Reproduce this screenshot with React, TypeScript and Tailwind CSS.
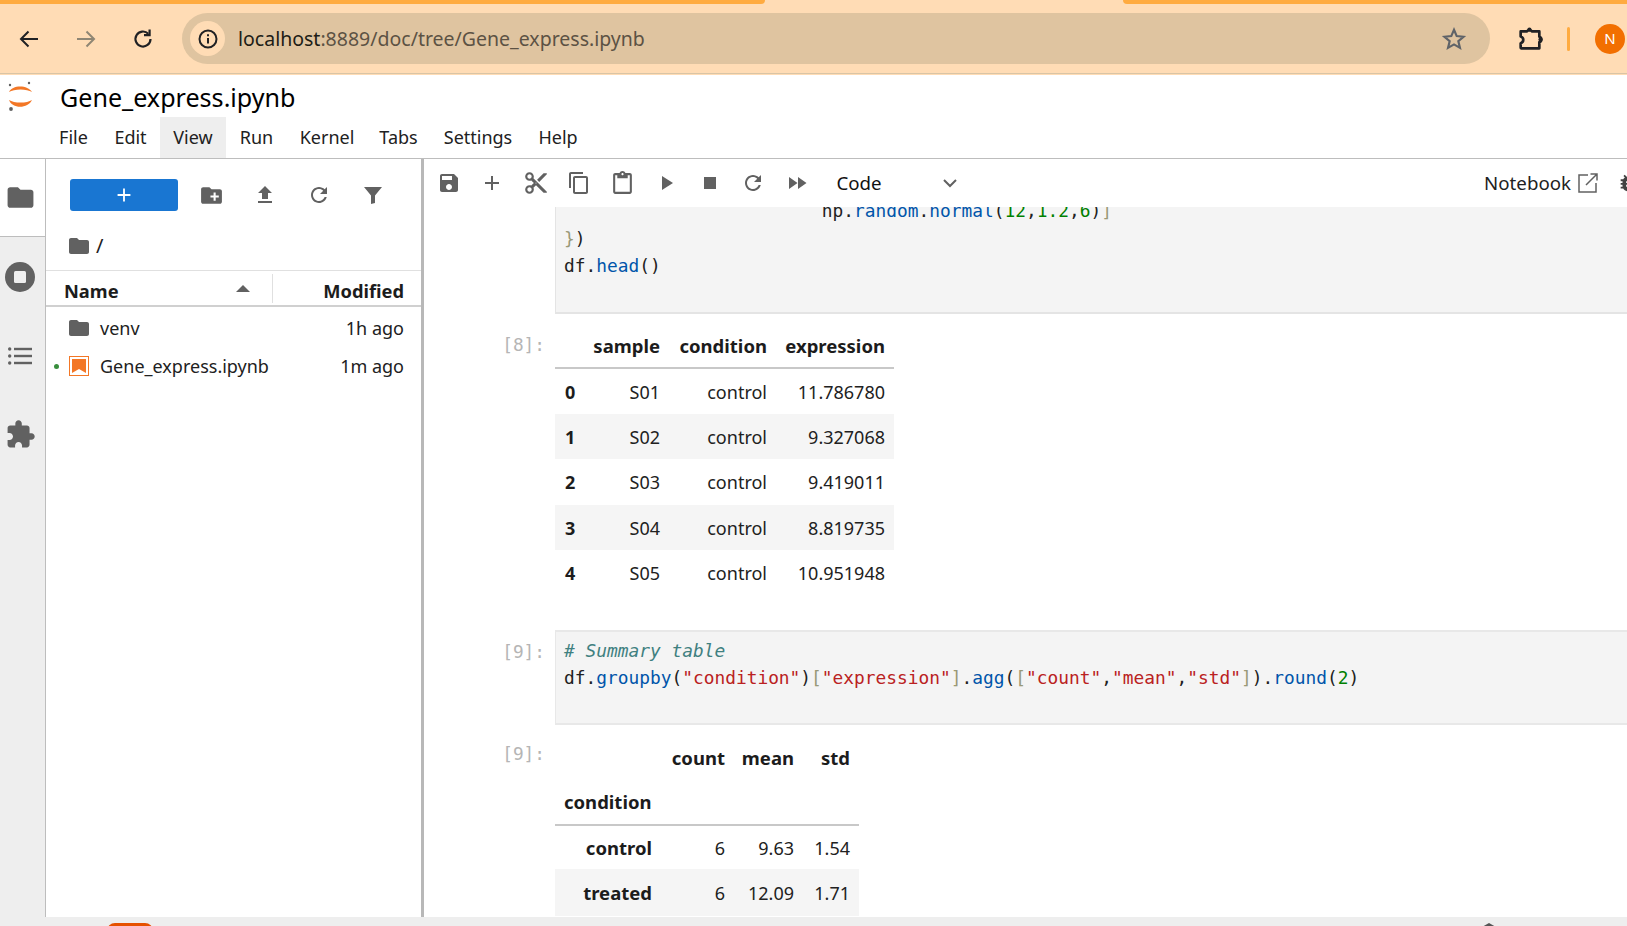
import type { ReactNode } from 'react';

const ICON = '#616161';

const P = {
  folder: 'M10 4H4c-1.1 0-1.99.9-1.99 2L2 18c0 1.1.9 2 2 2h16c1.1 0 2-.9 2-2V8c0-1.1-.9-2-2-2h-8l-2-2z',
  newFolder: 'M20 6h-8l-2-2H4c-1.11 0-1.99.89-1.99 2L2 18c0 1.11.89 2 2 2h16c1.11 0 2-.89 2-2V8c0-1.11-.89-2-2-2zm-1 8h-3v3h-2v-3h-3v-2h3V9h2v3h3v2z',
  upload: 'M9 16h6v-6h4l-7-7-7 7h4zm-4 2h14v2H5z',
  refresh: 'M17.65 6.35C16.2 4.9 14.21 4 12 4c-4.42 0-7.99 3.58-7.99 8s3.57 8 7.99 8c3.73 0 6.84-2.55 7.73-6h-2.08c-.82 2.33-3.04 4-5.65 4-3.31 0-6-2.69-6-6s2.69-6 6-6c1.66 0 3.14.69 4.22 1.78L13 11h7V4l-2.35 2.35z',
  filter: 'M3 4h18l-7 8.5V20l-4 1v-8.5z',
  save: 'M17 3H5c-1.11 0-2 .9-2 2v14c0 1.1.89 2 2 2h14c1.1 0 2-.9 2-2V7l-4-4zm-5 16c-1.66 0-3-1.34-3-3s1.34-3 3-3 3 1.34 3 3-1.34 3-3 3zm3-10H5V5h10v4z',
  add: 'M19 13h-6v6h-2v-6H5v-2h6V5h2v6h6v2z',
  cut: 'M9.64 7.64c.23-.5.36-1.05.36-1.64 0-2.21-1.79-4-4-4S2 3.79 2 6s1.79 4 4 4c.59 0 1.14-.13 1.64-.36L10 12l-2.36 2.36C7.14 14.13 6.59 14 6 14c-2.21 0-4 1.79-4 4s1.79 4 4 4 4-1.79 4-4c0-.59-.13-1.14-.36-1.64L12 14l7 7h3v-1L9.64 7.64zM6 8c-1.1 0-2-.89-2-2s.9-2 2-2 2 .89 2 2-.9 2-2 2zm0 12c-1.1 0-2-.89-2-2s.9-2 2-2 2 .89 2 2-.9 2-2 2zm6-7.5c-.28 0-.5-.22-.5-.5s.22-.5.5-.5.5.22.5.5-.22.5-.5.5zM19 3l-6 6 2 2 7-7V3z',
  copy: 'M16 1H4c-1.1 0-2 .9-2 2v14h2V3h12V1zm3 4H8c-1.1 0-2 .9-2 2v14c0 1.1.9 2 2 2h11c1.1 0 2-.9 2-2V7c0-1.1-.9-2-2-2zm0 16H8V7h11v14z',
  paste: 'M19 2h-4.18C14.4.84 13.3 0 12 0c-1.3 0-2.4.84-2.82 2H5c-1.1 0-2 .9-2 2v16c0 1.1.9 2 2 2h14c1.1 0 2-.9 2-2V4c0-1.1-.9-2-2-2zm-7 0c.55 0 1 .45 1 1s-.45 1-1 1-1-.45-1-1 .45-1 1-1zm7 18H5V4h2v3h10V4h2v16z',
  run: 'M8 5v14l11-7z',
  stop: 'M6 6h12v12H6z',
  fastForward: 'M4 18l8.5-6L4 6v12zm9-12v12l8.5-6L13 6z',
  extension: 'M20.5 11H19V7c0-1.1-.9-2-2-2h-4V3.5C13 2.12 11.88 1 10.5 1S8 2.12 8 3.5V5H4c-1.1 0-1.99.9-1.99 2v3.8H3.5c1.49 0 2.7 1.21 2.7 2.7s-1.21 2.7-2.7 2.7H2V20c0 1.1.9 2 2 2h3.8v-1.5c0-1.49 1.21-2.7 2.7-2.7 1.49 0 2.7 1.21 2.7 2.7V22H17c1.1 0 2-.9 2-2v-4h1.5c1.38 0 2.5-1.12 2.5-2.5S21.88 11 20.5 11z',
  bug: 'M20 8h-2.81a5.985 5.985 0 0 0-1.82-1.96L17 4.41 15.59 3l-2.17 2.17a6.002 6.002 0 0 0-2.83 0L8.41 3 7 4.41l1.62 1.63C7.88 6.55 7.26 7.22 6.81 8H4v2h2.09c-.05.33-.09.66-.09 1v1H4v2h2v1c0 .34.04.67.09 1H4v2h2.81c1.04 1.79 2.97 3 5.19 3s4.15-1.21 5.19-3H20v-2h-2.09c.05-.33.09-.66.09-1v-1h2v-2h-2v-1c0-.34-.04-.67-.09-1H20V8zm-6 8h-4v-2h4v2zm0-4h-4v-2h4v2z',
};

const Icon = ({ d, size = 24, color = ICON }: { d: string; size?: number; color?: string }) => (
  <svg width={size} height={size} viewBox="0 0 24 24" fill={color} className="shrink-0">
    <path d={d} />
  </svg>
);

const Tool = ({ d, size = 24 }: { d: string; size?: number }) => (
  <div className="w-[43.5px] flex items-center justify-center shrink-0">
    <Icon d={d} size={size} />
  </div>
);

const JupyterLogo = () => (
  <svg width="26" height="30" viewBox="8 80 26 30" className="shrink-0">
    <path d="M9 91C12 83.5 28 83.5 32 91 27 87.6 14 87.6 9 91z" fill="#f37726" />
    <path d="M9 99C14 102.4 27 102.4 32 99 28 108 12 108 9 99z" fill="#f37726" />
    <circle cx="10" cy="84" r="1.2" fill="#616161" />
    <circle cx="29" cy="82" r="1.2" fill="#616161" />
    <circle cx="11" cy="108" r="1.9" fill="#616161" />
  </svg>
);

const BrowserBar = () => (
  <div className="h-[75px] bg-[#ffdcb5] shrink-0">
    <div className="flex h-[4px] bg-[#ffdcb5]">
      <div className="w-[765px] bg-[#ffab40] rounded-br-[5px]" />
      <div className="w-[358px]" />
      <div className="flex-1 bg-[#ffab40] rounded-bl-[5px]" />
    </div>
    <div className="h-[70px] border-b border-[#d9c5a6] flex items-center">
      <svg width="24" height="24" viewBox="0 0 24 24" fill="none" stroke="#202124" strokeWidth="2" className="ml-[17px] shrink-0">
        <path d="M21 12H4M11.5 4.5 4 12l7.5 7.5" />
      </svg>
      <svg width="24" height="24" viewBox="0 0 24 24" fill="none" stroke="#8f8674" strokeWidth="2" className="ml-[33px] shrink-0">
        <path d="M3 12h17M12.5 4.5 20 12l-7.5 7.5" />
      </svg>
      <svg width="24" height="24" viewBox="0 0 24 24" fill="none" stroke="#202124" strokeWidth="2.2" className="ml-[33px] shrink-0">
        <path d="M19.5 12a7.5 7.5 0 1 1-2.2-5.3" />
        <path d="M18.6 2.6v5.6h-5.6" />
      </svg>
      <div className="ml-[27px] w-[1308px] h-[51px] rounded-full bg-[#dfc4a0] flex items-center shrink-0">
        <div className="ml-[8px] w-[35px] h-[35px] rounded-full bg-[#ffdcb5] flex items-center justify-center">
          <svg width="22" height="22" viewBox="0 0 22 22" fill="none" stroke="#202124" strokeWidth="2">
            <circle cx="11" cy="11" r="8.5" />
            <path d="M11 10v5.5M11 6.2v2" />
          </svg>
        </div>
        <div className="ml-[13px] text-[19.5px] leading-none text-[#5c5244]">
          <span className="text-[#201c16]">localhost</span>:8889/doc/tree/Gene_express.ipynb
        </div>
        <svg width="26" height="26" viewBox="0 0 24 24" fill="none" stroke="#5f6368" strokeWidth="2" className="ml-auto mr-[23px]">
          <path d="M12 3.5l2.5 5.8 6.3.6-4.8 4.1 1.5 6.2L12 17l-5.5 3.2L8 14 3.2 9.9l6.3-.6z" />
        </svg>
      </div>
      <svg width="28" height="28" viewBox="0 0 24 24" className="ml-[26px] shrink-0">
        <path d="M4 5.5h5.4a2.4 2.4 0 0 1 4.2 0H20v4.6a2.4 2.4 0 0 1 0 4.6v5.3H4.6a.8.8 0 0 1-.6-.8v-3.6a3 3 0 0 0 0-5.8z" fill="none" stroke="#202124" strokeWidth="2.3" strokeLinejoin="round" />
        <circle cx="21" cy="12.4" r="1.8" fill="#202124" />
        <circle cx="11.5" cy="4" r="1.8" fill="#202124" />
      </svg>
      <div className="ml-[23px] w-[3px] h-[24px] rounded-full bg-[#ffab40] shrink-0" />
      <div className="ml-[25px] w-[30px] h-[30px] rounded-full bg-[#f26f00] text-white text-[15px] flex items-center justify-center shrink-0">N</div>
    </div>
  </div>
);

const menuItems = [
  { label: 'File', cls: 'w-[55px]' },
  { label: 'Edit', cls: 'w-[59px]' },
  { label: 'View', cls: 'w-[66px] bg-[#eeeeee]' },
  { label: 'Run', cls: 'w-[61px]' },
  { label: 'Kernel', cls: 'w-[80px]' },
  { label: 'Tabs', cls: 'w-[63px]' },
  { label: 'Settings', cls: 'w-[96px]' },
  { label: 'Help', cls: 'w-[64px]' },
];

const AppHeader = () => (
  <div className="h-[84px] border-b border-[#bdbdbd] shrink-0 relative bg-white">
    <div className="h-[42px] flex">
      <div className="w-[60px] pl-[8px] pt-[6px]">
        <JupyterLogo />
      </div>
      <div className="text-[25.1px] leading-[44px] text-black">Gene_express.ipynb</div>
    </div>
    <div className="flex h-[41px] pl-[46px]">
      {menuItems.map((m) => (
        <div key={m.label} className={`${m.cls} flex items-center justify-center text-[18px] text-[#212121]`}>
          {m.label}
        </div>
      ))}
    </div>
  </div>
);

const SideRail = () => (
  <div className="w-[46px] shrink-0 flex flex-col bg-[#eeeeee] border-r border-[#bdbdbd]">
    <div className="h-[78px] bg-white border-b border-[#bdbdbd] flex items-center justify-center pr-[5px]">
      <Icon d={P.folder} size={31} />
    </div>
    <div className="h-[80px] flex items-center justify-center pr-[5px]">
      <svg width="30" height="30" viewBox="0 0 30 30">
        <circle cx="15" cy="15" r="15" fill={ICON} />
        <rect x="9" y="9" width="12" height="12" rx="1.5" fill="#eeeeee" />
      </svg>
    </div>
    <div className="h-[78px] flex items-center justify-center pr-[5px]">
      <svg width="24" height="18" viewBox="0 0 24 18" fill={ICON}>
        <circle cx="1.7" cy="2" r="1.7" />
        <circle cx="1.7" cy="9" r="1.7" />
        <circle cx="1.7" cy="16" r="1.7" />
        <rect x="6" y="0.8" width="18" height="2.4" />
        <rect x="6" y="7.8" width="18" height="2.4" />
        <rect x="6" y="14.8" width="18" height="2.4" />
      </svg>
    </div>
    <div className="h-[78px] flex items-center justify-center pr-[5px]">
      <Icon d={P.extension} size={31} />
    </div>
  </div>
);

const FilePanel = () => (
  <div className="w-[375px] shrink-0 flex flex-col bg-white text-[18px] text-[#212121]">
    <div className="h-[73px] flex items-center pl-[24px] pb-[1px]">
      <div className="w-[108px] h-[32px] rounded-[3px] bg-[#1976d2] flex items-center justify-center -mt-[1px]">
        <Icon d={P.add} size={22} color="#ffffff" />
      </div>
      <div className="ml-[19px] w-[28px] flex justify-center"><Icon d={P.newFolder} size={25} /></div>
      <div className="ml-[26px] w-[28px] flex justify-center"><Icon d={P.upload} size={24} /></div>
      <div className="ml-[26px] w-[28px] flex justify-center"><Icon d={P.refresh} size={24} /></div>
      <div className="ml-[26px] w-[28px] flex justify-center"><Icon d={P.filter} size={24} /></div>
    </div>
    <div className="h-[39px] flex items-center pl-[21px] border-b border-[#e0e0e0] pb-[10px]">
      <Icon d={P.folder} size={24} />
      <span className="ml-[5px] text-[20px]">/</span>
    </div>
    <div className="h-[36px] flex items-center border-b-2 border-[#d0d0d0] font-bold text-[18.3px] text-[#1c1c1c] shrink-0">
      <div className="w-[227px] pl-[18px] pt-[6px] flex items-center h-[29px] border-r border-[#e0e0e0]">
        Name
        <div className="ml-auto mr-[22px] -mt-[6px] w-0 h-0 border-l-[7px] border-r-[7px] border-b-[7px] border-l-transparent border-r-transparent border-b-[#616161]" />
      </div>
      <div className="flex-1 text-right pr-[17px] pt-[6px]">Modified</div>
    </div>
    <div className="h-[38px] mt-[2px] flex items-center pl-[21px] pr-[17px]">
      <Icon d={P.folder} size={24} />
      <span className="ml-[9px]">venv</span>
      <span className="ml-auto">1h ago</span>
    </div>
    <div className="h-[38px] flex items-center pl-[8px] pr-[17px] relative">
      <div className="w-[5px] h-[5px] rounded-full bg-[#388e3c] mr-[10px]" />
      <svg width="20" height="20" viewBox="0 0 20 20" className="shrink-0">
        <rect x="0.5" y="0.5" width="19" height="19" fill="#fff" stroke="#f37726" />
        <path d="M3 3h14v14l-7-4-7 4z" fill="#f37726" />
      </svg>
      <span className="ml-[11px]">Gene_express.ipynb</span>
      <span className="ml-auto">1m ago</span>
    </div>
  </div>
);

const NbToolbar = () => (
  <div className="h-[48px] flex items-center pl-[3px] bg-white shrink-0 overflow-hidden">
    <Tool d={P.save} />
    <Tool d={P.add} />
    <Tool d={P.cut} size={26} />
    <Tool d={P.copy} />
    <Tool d={P.paste} size={25} />
    <Tool d={P.run} />
    <Tool d={P.stop} />
    <Tool d={P.refresh} />
    <Tool d={P.fastForward} />
    <div className="ml-[18px] w-[104px] text-[18.7px] text-[#111111]">Code</div>
    <svg width="18" height="18" viewBox="0 0 18 18" fill="none" stroke={ICON} strokeWidth="2" className="shrink-0">
      <path d="M3 6l6 6 6-6" />
    </svg>
    <div className="ml-auto text-[18.7px] text-[#212121]">Notebook</div>
    <svg width="22" height="22" viewBox="0 0 22 22" fill="none" stroke={ICON} strokeWidth="1.5" className="ml-[6px] shrink-0">
      <path d="M11 3H2v17h17v-9M9 13 20 2M13.5 2H20v6.5" />
    </svg>
    <div className="ml-[18px] -mr-[12px] shrink-0"><Icon d={P.bug} size={22} color="#424242" /></div>
  </div>
);

const Nm = ({ children }: { children: ReactNode }) => <span className="text-[#0055aa]">{children}</span>;
const Str = ({ children }: { children: ReactNode }) => <span className="text-[#ba2121]">{children}</span>;
const Br = ({ children }: { children: ReactNode }) => <span className="text-[#999977]">{children}</span>;
const Num = ({ children }: { children: ReactNode }) => <span className="text-[#008000]">{children}</span>;

const Prompt = ({ text }: { text: string }) => (
  <div className="w-[131px] shrink-0 pr-[10px] text-right font-['DejaVu_Sans_Mono',monospace] text-[17.8px] leading-[27px] text-[#b5b5b5]">
    {text}
  </div>
);

const Code = ({ children }: { children: ReactNode }) => (
  <pre className="font-['DejaVu_Sans_Mono',monospace] text-[17.85px] leading-[27px] text-[#212121]">{children}</pre>
);

const th = 'pr-[9px] pt-[2px] text-right font-bold text-[18.5px] text-[#1c1c1c]';
const headTh = 'pr-[9px] text-right font-bold text-[18.5px] text-[#1c1c1c]';
const td = 'pr-[9px] pt-[2px] text-right font-normal';

const sampleRows = [
  ['0', 'S01', 'control', '11.786780'],
  ['1', 'S02', 'control', '9.327068'],
  ['2', 'S03', 'control', '9.419011'],
  ['3', 'S04', 'control', '8.819735'],
  ['4', 'S05', 'control', '10.951948'],
];

const SampleTable = () => (
  <table className="table-fixed w-[339px] text-[18px] text-[#212121] border-collapse">
    <colgroup>
      <col className="w-[30px]" />
      <col className="w-[84px]" />
      <col className="w-[107px]" />
      <col className="w-[118px]" />
    </colgroup>
    <thead>
      <tr className="h-[44px] border-b-2 border-[#c8c8c8]">
        <th />
        <th className={headTh}>sample</th>
        <th className={headTh}>condition</th>
        <th className={headTh}>expression</th>
      </tr>
    </thead>
    <tbody>
      {sampleRows.map((r, i) => (
        <tr key={r[0]} className={`h-[45.5px] ${i % 2 === 1 ? 'bg-[#f5f5f5]' : ''}`}>
          <td className="pl-[10px] pt-[2px] font-bold text-[#1c1c1c]">{r[0]}</td>
          <td className={td}>{r[1]}</td>
          <td className={td}>{r[2]}</td>
          <td className={td}>{r[3]}</td>
        </tr>
      ))}
    </tbody>
  </table>
);

const SummaryTable = () => (
  <table className="table-fixed w-[304px] text-[18px] text-[#212121] border-collapse">
    <colgroup>
      <col className="w-[106px]" />
      <col className="w-[73px]" />
      <col className="w-[69px]" />
      <col className="w-[56px]" />
    </colgroup>
    <thead>
      <tr className="h-[44px]">
        <th />
        <th className={headTh}>count</th>
        <th className={headTh}>mean</th>
        <th className={headTh}>std</th>
      </tr>
      <tr className="h-[45px] border-b-2 border-[#c8c8c8]">
        <th className="pl-[9px] text-left font-bold text-[18.5px] text-[#1c1c1c]">condition</th>
        <th />
        <th />
        <th />
      </tr>
    </thead>
    <tbody>
      <tr className="h-[44px]">
        <th className={th}>control</th>
        <td className={td}>6</td>
        <td className={td}>9.63</td>
        <td className={td}>1.54</td>
      </tr>
      <tr className="h-[47px] bg-[#f5f5f5]">
        <th className={th}>treated</th>
        <td className={td}>6</td>
        <td className={td}>12.09</td>
        <td className={td}>1.71</td>
      </tr>
    </tbody>
  </table>
);

const Notebook = () => (
  <div className="flex-1 min-w-0 flex flex-col bg-white border-l-[3px] border-[#b8b8b8]">
    <NbToolbar />
    <div className="flex-1 overflow-hidden">
      <div className="flex">
        <Prompt text="" />
        <div className="flex-1 h-[107px] overflow-hidden bg-[#f4f4f4] border-l border-b-2 border-[#e4e4e4] pl-[8px]">
          <div className="-mt-[10px]">
            <Code>
              {'                        np.'}<Nm>random</Nm>.<Nm>normal</Nm>(<Num>12</Num>,<Num>1.2</Num>,<Num>6</Num>)<Br>]</Br>
            </Code>
            <div className="mt-[1px]">
              <Code><Br>{'}'}</Br>)</Code>
            </div>
            <Code>df.<Nm>head</Nm>()</Code>
          </div>
        </div>
      </div>
      <div className="flex mt-[10px]">
        <div className="pt-[7px]"><Prompt text="[8]:" /></div>
        <SampleTable />
      </div>
      <div className="flex mt-[34px]">
        <div className="pt-[8px]"><Prompt text="[9]:" /></div>
        <div className="flex-1 h-[95px] bg-[#f4f4f4] border-l border-t-2 border-b-2 border-[#e8e8e8] pl-[8px] pt-[5px]">
          <Code><span className="italic text-[#408080]"># Summary table</span></Code>
          <Code>
            df.<Nm>groupby</Nm>(<Str>"condition"</Str>)<Br>[</Br><Str>"expression"</Str><Br>]</Br>.<Nm>agg</Nm>(<Br>[</Br><Str>"count"</Str>,<Str>"mean"</Str>,<Str>"std"</Str><Br>]</Br>).<Nm>round</Nm>(<Num>2</Num>)
          </Code>
        </div>
      </div>
      <div className="flex mt-[11px]">
        <div className="pt-[4px]"><Prompt text="[9]:" /></div>
        <SummaryTable />
      </div>
    </div>
  </div>
);

const StatusBar = () => (
  <div className="h-[9px] bg-[#eeeeee] shrink-0 overflow-hidden flex pt-[6px]">
    <div className="ml-[107px] w-[46px] h-[12px] rounded-t-[8px] bg-[#e65100]" />
    <div className="ml-[1329px] w-0 h-0 border-l-[7px] border-r-[7px] border-b-[4px] border-l-transparent border-r-transparent border-b-[#555555]" />
  </div>
);

export default function App() {
  return (
    <div className="w-[1627px] h-[926px] flex flex-col overflow-hidden bg-white font-['Noto_Sans',sans-serif]">
      <BrowserBar />
      <AppHeader />
      <div className="flex-1 min-h-0 flex">
        <SideRail />
        <FilePanel />
        <Notebook />
      </div>
      <StatusBar />
    </div>
  );
}
